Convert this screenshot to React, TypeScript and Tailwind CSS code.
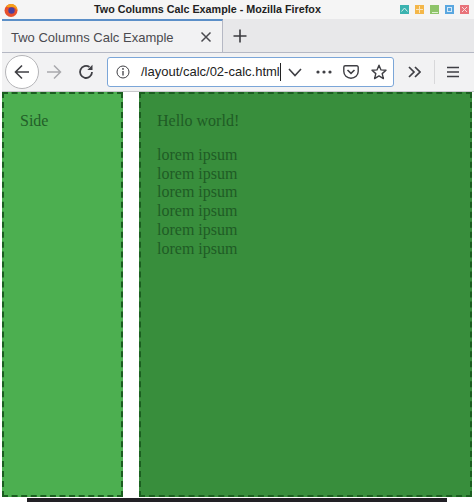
import React from "react";

const ico = "fill-none stroke-current";

export default function App() {
  return (
    <div className="w-[474px] h-[502px] overflow-hidden bg-white flex flex-col font-['Liberation_Sans',sans-serif]">
      {/* title bar */}
      <div className="h-[19px] shrink-0 bg-[#f5f5f5] flex items-center pl-[4px] pr-[4px]">
        <svg width="14" height="14" viewBox="0 0 14 14" className="shrink-0">
          <circle cx="7" cy="7.5" r="6.5" fill="#e8502c" />
          <circle cx="7.5" cy="7.5" r="3.2" fill="#4a3fa0" />
          <path d="M2 3.5 C4 0.5 9 0 11.5 2.5 C13.5 4.5 13.5 6.5 13.3 8 C12 5 10 3.6 7.5 4 C5.5 4 3.5 4.5 2 3.5Z" fill="#f7a11b" />
        </svg>
        <div className="flex-1 text-center text-[10.75px] font-bold text-[#222] leading-[19px] pr-[3px]">
          Two Columns Calc Example - Mozilla Firefox
        </div>
        <div className="flex gap-[6px] items-center mr-[1px]">
          <span className="w-[9px] h-[9px] bg-[#3bb3b0] flex items-center justify-center">
            <svg width="7" height="5" viewBox="0 0 7 5"><path d="M0.5 4.5 L3.5 1 L6.5 4.5" className={ico} strokeWidth="1" color="#d4f0ee" /></svg>
          </span>
          <span className="w-[9px] h-[9px] bg-[#f4b74a] flex items-center justify-center">
            <svg width="7" height="7" viewBox="0 0 7 7"><path d="M3.5 0V7M0 3.5H7" className={ico} strokeWidth="1" color="#fbe6bd" /></svg>
          </span>
          <span className="w-[9px] h-[9px] bg-[#8ec46a] flex items-end justify-center">
            <span className="w-[6px] h-[1px] mb-[1px] bg-[#dff0d2]" />
          </span>
          <span className="w-[9px] h-[9px] bg-[#5aa7e0] flex items-center justify-center">
            <span className="w-[5px] h-[5px] border border-[#d6e9f8]" />
          </span>
          <span className="w-[9px] h-[9px] bg-[#e8737a] flex items-center justify-center">
            <svg width="7" height="7" viewBox="0 0 7 7"><path d="M1 1L6 6M6 1L1 6" className={ico} strokeWidth="1" color="#fbdcde" /></svg>
          </span>
        </div>
      </div>

      {/* tab strip */}
      <div className="h-[33px] shrink-0 bg-[#e8e8ea] flex ml-[2px]">
        <div className="w-[221px] bg-[#f2f2f3] border-t-[2px] border-[#5b8fc8] border-r border-r-[#b5b8c4] flex items-center pl-[9px] pr-[10px] text-[#4a4a4f] -mb-[1px]">
          <span className="flex-1 text-[13px] leading-none whitespace-nowrap">Two Columns Calc Example</span>
          <svg width="12" height="12" viewBox="0 0 12 12"><path d="M1.5 1.5L10.5 10.5M10.5 1.5L1.5 10.5" className={ico} strokeWidth="1.5" /></svg>
        </div>
        <div className="w-[34px] flex items-center justify-center text-[#3a3a3f]">
          <svg width="14" height="14" viewBox="0 0 14 14"><path d="M7 0.5V13.5M0.5 7H13.5" className={ico} strokeWidth="1.6" /></svg>
        </div>
      </div>

      {/* nav bar */}
      <div className="h-[40px] shrink-0 bg-[#f2f2f3] border-t border-[#b5b8c4] border-b border-b-[#c8c8cc] flex items-center pl-[5px] ml-[2px] text-[#3f3f44]">
        <div className="w-[34px] h-[34px] -ml-[2px] rounded-full border border-[#b5b5b8] bg-white flex items-center justify-center shrink-0">
          <svg width="16" height="16" viewBox="0 0 16 16"><path d="M15 8H1.5M8 1.5L1.5 8L8 14.5" className={ico} strokeWidth="1.6" /></svg>
        </div>
        <div className="w-[30px] flex items-center justify-center text-[#a9a9ad] shrink-0">
          <svg width="16" height="16" viewBox="0 0 16 16"><path d="M1 8H14.5M8 1.5L14.5 8L8 14.5" className={ico} strokeWidth="1.5" /></svg>
        </div>
        <div className="w-[26px] flex items-center justify-center shrink-0 ml-[4px]">
          <svg width="16" height="16" viewBox="0 0 16 16"><path d="M14 8A6 6 0 1 1 11.5 3.1" className={ico} strokeWidth="1.8" /><path d="M14.5 0.8V6H9.3Z" fill="currentColor" /></svg>
        </div>
        <div className="ml-[8px] w-[287px] h-[30px] shrink-0 bg-white border border-[#7ba6d8] rounded-[3px] flex items-center pl-[8px]">
          <svg width="14" height="14" viewBox="0 0 14 14" className="shrink-0"><circle cx="7" cy="7" r="6" className={ico} strokeWidth="1" /><path d="M7 6V10.5" className={ico} strokeWidth="1.3" /><circle cx="7" cy="3.9" r="0.9" fill="currentColor" /></svg>
          <span className="ml-[11px] w-[140px] text-[13px] text-[#222] whitespace-nowrap border-r border-[#222] leading-[18px] shrink-0">/layout/calc/02-calc.html</span>
          <svg width="14" height="9" viewBox="0 0 14 9" className="ml-[7px] shrink-0"><path d="M1 1L7 7.5L13 1" className={ico} strokeWidth="1.6" /></svg>
          <svg width="16" height="4" viewBox="0 0 16 4" className="ml-[14px] shrink-0"><circle cx="2" cy="2" r="1.6" fill="currentColor" /><circle cx="8" cy="2" r="1.6" fill="currentColor" /><circle cx="14" cy="2" r="1.6" fill="currentColor" /></svg>
          <svg width="16" height="14" viewBox="0 0 16 14" className="ml-[11px] shrink-0"><path d="M2.2 0.8H13.8A1.4 1.4 0 0 1 15.2 2.2V6.5A7.2 6.7 0 0 1 0.8 6.5V2.2A1.4 1.4 0 0 1 2.2 0.8Z" className={ico} strokeWidth="1.4" /><path d="M4.5 5L8 8.3L11.5 5" className={ico} strokeWidth="1.6" /></svg>
          <svg width="16" height="16" viewBox="0 0 16 16" className="ml-[12px] shrink-0"><path d="M8 1.2L10 5.9L15 6.3L11.2 9.6L12.4 14.6L8 11.9L3.6 14.6L4.8 9.6L1 6.3L6 5.9Z" className={ico} strokeWidth="1.4" strokeLinejoin="round" /></svg>
        </div>
        <svg width="13" height="12" viewBox="0 0 13 12" className="ml-[14px] shrink-0"><path d="M1 1L6 6L1 11M7 1L12 6L7 11" className={ico} strokeWidth="1.7" /></svg>
        <div className="ml-[13px] w-[1px] h-[24px] bg-[#d8d8da] shrink-0" />
        <svg width="12" height="12" viewBox="0 0 12 12" className="ml-[12px] shrink-0"><path d="M0 1.5H12M0 6H12M0 10.5H12" className={ico} strokeWidth="1.6" /></svg>
      </div>

      {/* page */}
      <div className="flex-1 min-h-0 flex pl-[2px] pr-[2px] font-['Liberation_Serif',serif] text-[16px] leading-[18.8px]">
        <div className="w-[121px] shrink-0 bg-[#4caf50] border-2 border-dashed border-[#1b5e20] pt-[18px] px-[16px] text-[#235f29]">
          Side
        </div>
        <div className="w-[16px] shrink-0" />
        <div className="flex-1 bg-[#388e3c] border-2 border-dashed border-[#1b5e20] pt-[18px] px-[16px] text-[#1f5c25]">
          <p>Hello world!</p>
          <p className="mt-[15px]">
            lorem ipsum<br />lorem ipsum<br />lorem ipsum<br />lorem ipsum<br />lorem ipsum<br />lorem ipsum
          </p>
        </div>
      </div>

      {/* bottom edge */}
      <div className="h-[5px] shrink-0 pt-[1px] px-[27px] bg-white">
        <div className="h-[4px] bg-[#222025]" />
      </div>
    </div>
  );
}
